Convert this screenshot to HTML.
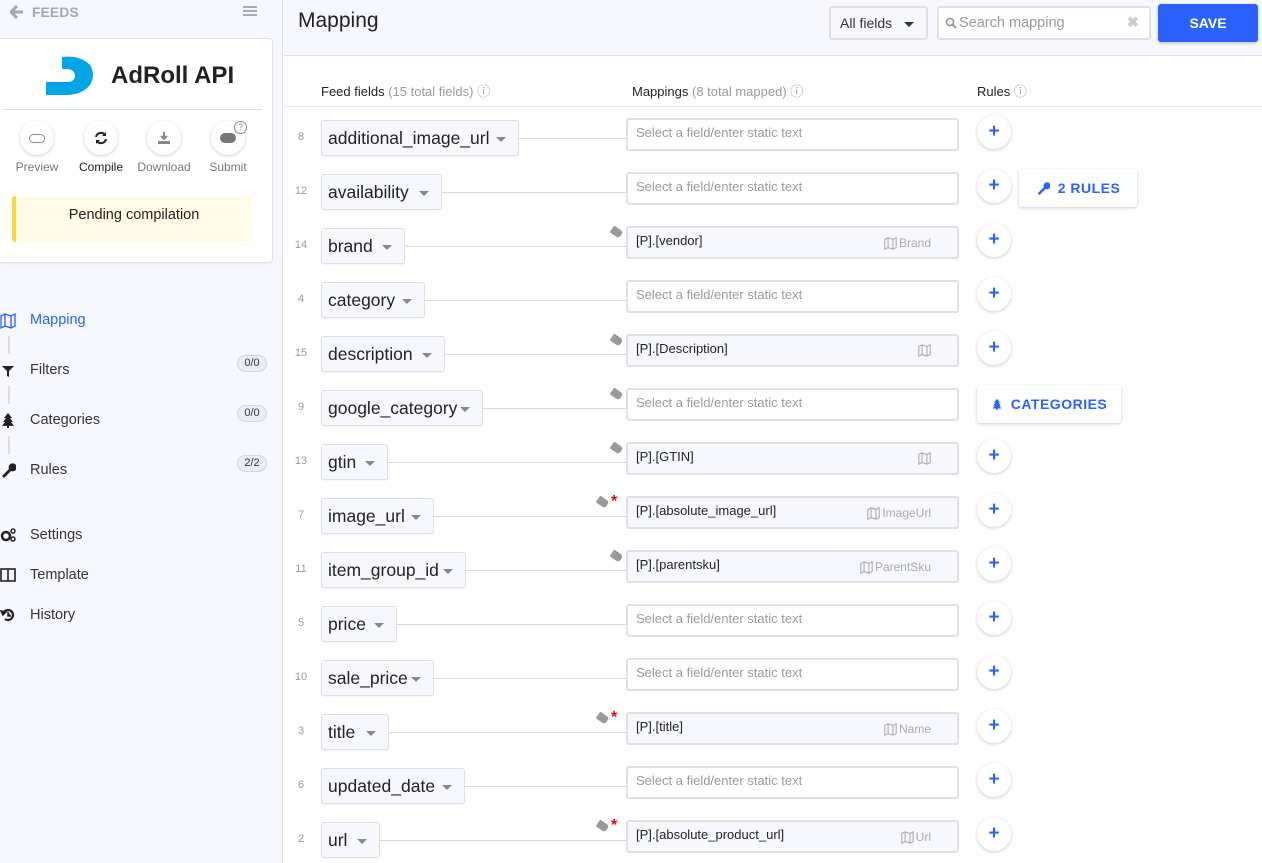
<!DOCTYPE html>
<html><head><meta charset="utf-8"><style>
*{box-sizing:border-box;margin:0;padding:0}
body{width:1262px;height:863px;overflow:hidden;font-family:"Liberation Sans",sans-serif;background:#fff;position:relative;color:#222}
.os{font-family:"DejaVu Sans","Liberation Sans",sans-serif}
#side{position:absolute;left:0;top:0;width:283px;height:863px;background:#f7f8fd;border-right:1px solid #dde0e6}
#card{position:absolute;left:0;top:38px;width:273px;height:225px;background:#fff;border:1px solid #e0e2e8;border-left:none;border-radius:0 4px 4px 0;box-shadow:0 1px 2px rgba(0,0,0,.06)}
.act{position:absolute;top:82px;width:34px;height:34px;border-radius:50%;background:#fff;box-shadow:0 1px 3px rgba(0,0,0,.2);display:flex;align-items:center;justify-content:center}
.actl{position:absolute;top:121px;font-size:12px;color:#777;width:64px;text-align:center}
.nav{position:absolute;left:30px;font-size:14.5px;color:#333}
.navi{position:absolute;left:0;width:16px;height:16px}
.badge{position:absolute;left:237px;width:30px;height:17px;border:1px solid #cfd6e0;background:#e9eef5;border-radius:9px;font-size:11px;text-align:center;line-height:15px;color:#333}
.vl{position:absolute;left:8px;width:2px;height:18px;background:#ddd}
#head{position:absolute;left:284px;top:0;width:978px;height:56px;background:#f7f8fd;border-bottom:1px solid #dde0e6}
.num{position:absolute;left:288px;width:26px;text-align:center;font-size:11px;color:#999}
.fb{position:absolute;left:321px;height:36px;background:#f7f8fd;border:1px solid #dcdfe5;border-radius:3px;font-size:17.5px;color:#222;padding:7px 0 0 6px;box-shadow:0 1px 1px rgba(0,0,0,.05);font-family:"Liberation Sans",sans-serif}
.fb:after{content:"";position:absolute;right:12px;top:16px;border:5px solid transparent;border-top:5px solid #888;border-bottom:none}
.ln{position:absolute;height:1px;background:#d5d8dd}
.in{position:absolute;left:626px;width:333px;height:33px;border:2px solid #e0e0e0;border-radius:3px;background:#fff;font-size:13px;color:#999;padding:5px 8px}
.in.f{background:#f7f8fd;color:#222}
.hint{position:absolute;right:26px;top:8px;font-size:12px;color:#aaa;display:flex;align-items:center;gap:2px}
.pl{position:absolute;left:977px;width:34px;height:34px;border-radius:50%;background:#fff;box-shadow:0 1px 3px rgba(0,0,0,.22);color:#2962ff;font-size:19px;font-weight:bold;text-align:center;line-height:33px}
.tag{position:absolute;width:11px;height:8px;background:#999;border-radius:1px 3px 3px 1px;transform:rotate(35deg)}
.star{position:absolute;color:#e00;font-size:16px;font-weight:bold}
.btn2{position:absolute;background:#fff;border-radius:3px;box-shadow:0 1px 3px rgba(0,0,0,.2);color:#2962ff;font-weight:bold;font-size:14px;letter-spacing:.5px;display:flex;align-items:center;justify-content:center;gap:8px}
</style></head><body>
<svg width="0" height="0" style="position:absolute"><defs><symbol id="map" viewBox="0 0 16 16"><path d="M1 3l4-2 6 2 4-2v12l-4 2-6-2-4 2z M5 1v12 M11 3v12" fill="none" stroke="currentColor" stroke-width="1.3"/></symbol></defs></svg>
<div id="side">
 <svg style="position:absolute;left:10px;top:5px" width="14" height="14" viewBox="0 0 14 14"><path d="M7 1L1 7l6 6M1 7h12" fill="none" stroke="#a0a8b0" stroke-width="3"/></svg>
 <div style="position:absolute;left:32px;top:4px;font-size:14px;color:#a0a8b0;font-weight:bold">FEEDS</div>
 <div style="position:absolute;left:243px;top:6px;width:14px;height:2px;background:#aab;box-shadow:0 4px 0 #aab,0 8px 0 #aab"></div>
 <div id="card">
  <svg style="position:absolute;left:46px;top:16px" width="50" height="40" viewBox="0 0 50 40"><path d="M16 8 L16 2 Q34 0 44 10 Q50 20 44 30 Q36 40 20 40 L0 40 L0 27 L22 27 Q28 27 29 21 Q29 15 22 14 L16 14 Z" fill="#00a5e8"/></svg>
  <div style="position:absolute;left:111px;top:23px;font-size:24px;font-weight:bold;color:#222">AdRoll API</div>
  <div style="position:absolute;left:3px;right:10px;top:70px;height:1px;background:#ddd"></div>
  <div class="act" style="left:20px"><div style="width:16px;height:9px;border:1.5px solid #888;border-radius:5px"></div></div>
  <div class="act" style="left:84px"><svg width="14" height="14" viewBox="0 0 14 14"><path d="M2 6a5 5 0 0 1 9-2M12 8a5 5 0 0 1-9 2" fill="none" stroke="#222" stroke-width="2"/><path d="M12 1v4H8zM2 13V9h4z" fill="#222"/></svg></div>
  <div class="act" style="left:147px"><svg width="12" height="12" viewBox="0 0 12 12"><path d="M6 0v7M3 4l3 3 3-3" fill="none" stroke="#888" stroke-width="2"/><rect x="0" y="9" width="12" height="3" fill="#888"/></svg></div>
  <div class="act" style="left:211px"><div style="width:16px;height:10px;background:#777;border-radius:5px"></div></div>
  <div style="position:absolute;left:234px;top:82px;width:13px;height:13px;border:1px solid #888;border-radius:50%;font-size:9px;color:#888;text-align:center;line-height:11px;background:#fff">?</div>
  <div class="actl" style="left:5px">Preview</div>
  <div class="actl" style="left:69px;color:#222">Compile</div>
  <div class="actl" style="left:132px">Download</div>
  <div class="actl" style="left:196px">Submit</div>
  <div style="position:absolute;left:12px;top:157px;width:240px;height:46px;background:#fffbe6;border-left:4px solid #fbd33c;border-radius:3px;font-size:14.5px;text-align:center;line-height:38px;color:#222">Pending compilation</div>
 </div>
 <svg class="navi" style="top:313px;color:#2962ff"><use href="#map"/></svg>
 <div class="nav" style="top:312px;color:#2962ff">Mapping</div>
 <div class="vl" style="top:336px"></div>
 <svg class="navi" style="top:363px" viewBox="0 0 16 16"><path d="M2 3h12l-5 5v6l-2-1v-5z" fill="#222"/></svg>
 <div class="nav" style="top:362px">Filters</div><div class="badge" style="top:355px">0/0</div>
 <div class="vl" style="top:386px"></div>
 <svg class="navi" style="top:412px" viewBox="0 0 16 16"><path d="M8 1l4 5h-2l3 4h-2l3 4H2l3-4H3l3-4H4z M7 14h2v2H7z" fill="#222"/></svg>
 <div class="nav" style="top:412px">Categories</div><div class="badge" style="top:405px">0/0</div>
 <div class="vl" style="top:436px"></div>
 <svg class="navi" style="top:462px" viewBox="0 0 16 16"><path d="M2 14l7-7a4 4 0 1 1 2 2l-7 7z" fill="#222"/></svg>
 <div class="nav" style="top:462px">Rules</div><div class="badge" style="top:455px">2/2</div>
 <svg class="navi" style="top:527px" viewBox="0 0 16 16"><circle cx="6" cy="9" r="4" fill="none" stroke="#222" stroke-width="2.5"/><circle cx="13" cy="4" r="2" fill="none" stroke="#222" stroke-width="1.5"/><circle cx="13" cy="12" r="2" fill="none" stroke="#222" stroke-width="1.5"/></svg>
 <div class="nav" style="top:527px">Settings</div>
 <svg class="navi" style="top:567px" viewBox="0 0 16 16"><rect x="1" y="2" width="14" height="12" fill="none" stroke="#222" stroke-width="1.6"/><path d="M8 2v12" stroke="#222" stroke-width="1.6"/></svg>
 <div class="nav" style="top:567px">Template</div>
 <svg class="navi" style="top:607px" viewBox="0 0 16 16"><path d="M3 8a5 5 0 1 1 2 4" fill="none" stroke="#222" stroke-width="2.2"/><path d="M1 4l2 4 3-3z M8 5v4h3" fill="#222" stroke="#222" stroke-width="1.5"/></svg>
 <div class="nav" style="top:607px">History</div>
</div>
<div id="head">
 <div style="position:absolute;left:14px;top:9px;font-size:21px;color:#222">Mapping</div>
 <div style="position:absolute;left:545px;top:6px;width:99px;height:34px;border:2px solid #e0e0e0;border-radius:3px;background:#f7f8fd;font-size:14px;color:#333;padding:7px 0 0 9px">All fields <span style="display:inline-block;margin-left:8px;border:5px solid transparent;border-top:5px solid #333;border-bottom:none;vertical-align:middle"></span></div>
 <div style="position:absolute;left:653px;top:6px;width:214px;height:34px;border:2px solid #e0e0e0;border-radius:3px;background:#fff;font-size:14.5px;color:#999;padding:7px 0 0 20px"><svg style="position:absolute;left:6px;top:9px" width="12" height="12" viewBox="0 0 12 12"><circle cx="5" cy="5" r="3.6" fill="none" stroke="#999" stroke-width="1.8"/><path d="M7.5 7.5L11 11" stroke="#999" stroke-width="2"/></svg>Search mapping<span style="position:absolute;right:10px;top:7px;color:#ccc;font-weight:bold">✖</span></div>
 <div style="position:absolute;left:874px;top:4px;width:100px;height:38px;background:#2962ff;border-radius:3px;color:#fff;font-weight:bold;font-size:14px;text-align:center;line-height:38px;box-shadow:0 1px 3px rgba(0,0,0,.25)">SAVE</div>
</div>
<div style="position:absolute;left:284px;top:106px;width:978px;height:1px;background:#e3e5e9"></div>
<div style="position:absolute;left:321px;top:81px;font-size:13px;color:#222">Feed fields <span style="color:#999">(15 total fields) ⓘ</span></div>
<div style="position:absolute;left:632px;top:81px;font-size:13px;color:#222">Mappings <span style="color:#999">(8 total mapped) ⓘ</span></div>
<div style="position:absolute;left:977px;top:81px;font-size:13px;color:#222">Rules <span style="color:#999">ⓘ</span></div>

<div class="num" style="top:131px">8</div><div class="fb" style="top:120px;width:198px">additional_image_url</div><div class="ln" style="left:519px;top:138px;width:107px"></div><div class="in" style="top:118px">Select a field/enter static text</div><div class="pl" style="top:115px">+</div>
<div class="num" style="top:185px">12</div><div class="fb" style="top:174px;width:121px">availability</div><div class="ln" style="left:442px;top:192px;width:184px"></div><div class="in" style="top:172px">Select a field/enter static text</div><div class="pl" style="top:169px">+</div>
<div class="btn2" style="left:1019px;top:169px;width:118px;height:38px"><svg width="14" height="14" viewBox="0 0 16 16"><path d="M2 14l7-7a4 4 0 1 1 2 2l-7 7z" fill="#2962ff"/></svg>2 RULES</div>
<div class="num" style="top:239px">14</div><div class="fb" style="top:228px;width:84px">brand</div><div class="ln" style="left:405px;top:246px;width:221px"></div><div class="tag" style="left:611px;top:228px"></div><div class="in f" style="top:226px">[P].[vendor]<span class="hint"><svg width="13" height="13"><use href="#map"/></svg>Brand</span></div><div class="pl" style="top:223px">+</div>
<div class="num" style="top:293px">4</div><div class="fb" style="top:282px;width:104px">category</div><div class="ln" style="left:425px;top:300px;width:201px"></div><div class="in" style="top:280px">Select a field/enter static text</div><div class="pl" style="top:277px">+</div>
<div class="num" style="top:347px">15</div><div class="fb" style="top:336px;width:124px">description</div><div class="ln" style="left:445px;top:354px;width:181px"></div><div class="tag" style="left:611px;top:336px"></div><div class="in f" style="top:334px">[P].[Description]<span class="hint"><svg width="13" height="13"><use href="#map"/></svg></span></div><div class="pl" style="top:331px">+</div>
<div class="num" style="top:401px">9</div><div class="fb" style="top:390px;width:162px">google_category</div><div class="ln" style="left:483px;top:408px;width:143px"></div><div class="tag" style="left:611px;top:390px"></div><div class="in" style="top:388px">Select a field/enter static text</div>
<div class="btn2" style="left:977px;top:385px;width:144px;height:38px"><svg width="12" height="14" viewBox="0 0 16 16"><path d="M8 1l4 5h-2l3 4h-2l3 4H2l3-4H3l3-4H4z M7 14h2v2H7z" fill="#2962ff"/></svg>CATEGORIES</div>
<div class="num" style="top:455px">13</div><div class="fb" style="top:444px;width:67px">gtin</div><div class="ln" style="left:388px;top:462px;width:238px"></div><div class="tag" style="left:611px;top:444px"></div><div class="in f" style="top:442px">[P].[GTIN]<span class="hint"><svg width="13" height="13"><use href="#map"/></svg></span></div><div class="pl" style="top:439px">+</div>
<div class="num" style="top:509px">7</div><div class="fb" style="top:498px;width:113px">image_url</div><div class="ln" style="left:434px;top:516px;width:192px"></div><div class="tag" style="left:597px;top:498px"></div><div class="star" style="left:611px;top:493px">*</div><div class="in f" style="top:496px">[P].[absolute_image_url]<span class="hint"><svg width="13" height="13"><use href="#map"/></svg>ImageUrl</span></div><div class="pl" style="top:493px">+</div>
<div class="num" style="top:563px">11</div><div class="fb" style="top:552px;width:145px">item_group_id</div><div class="ln" style="left:466px;top:570px;width:160px"></div><div class="tag" style="left:611px;top:552px"></div><div class="in f" style="top:550px">[P].[parentsku]<span class="hint"><svg width="13" height="13"><use href="#map"/></svg>ParentSku</span></div><div class="pl" style="top:547px">+</div>
<div class="num" style="top:617px">5</div><div class="fb" style="top:606px;width:76px">price</div><div class="ln" style="left:397px;top:624px;width:229px"></div><div class="in" style="top:604px">Select a field/enter static text</div><div class="pl" style="top:601px">+</div>
<div class="num" style="top:671px">10</div><div class="fb" style="top:660px;width:113px">sale_price</div><div class="ln" style="left:434px;top:678px;width:192px"></div><div class="in" style="top:658px">Select a field/enter static text</div><div class="pl" style="top:655px">+</div>
<div class="num" style="top:725px">3</div><div class="fb" style="top:714px;width:68px">title</div><div class="ln" style="left:389px;top:732px;width:237px"></div><div class="tag" style="left:597px;top:714px"></div><div class="star" style="left:611px;top:709px">*</div><div class="in f" style="top:712px">[P].[title]<span class="hint"><svg width="13" height="13"><use href="#map"/></svg>Name</span></div><div class="pl" style="top:709px">+</div>
<div class="num" style="top:779px">6</div><div class="fb" style="top:768px;width:144px">updated_date</div><div class="ln" style="left:465px;top:786px;width:161px"></div><div class="in" style="top:766px">Select a field/enter static text</div><div class="pl" style="top:763px">+</div>
<div class="num" style="top:833px">2</div><div class="fb" style="top:822px;width:59px">url</div><div class="ln" style="left:380px;top:840px;width:246px"></div><div class="tag" style="left:597px;top:822px"></div><div class="star" style="left:611px;top:817px">*</div><div class="in f" style="top:820px">[P].[absolute_product_url]<span class="hint"><svg width="13" height="13"><use href="#map"/></svg>Url</span></div><div class="pl" style="top:817px">+</div>
</body></html>
